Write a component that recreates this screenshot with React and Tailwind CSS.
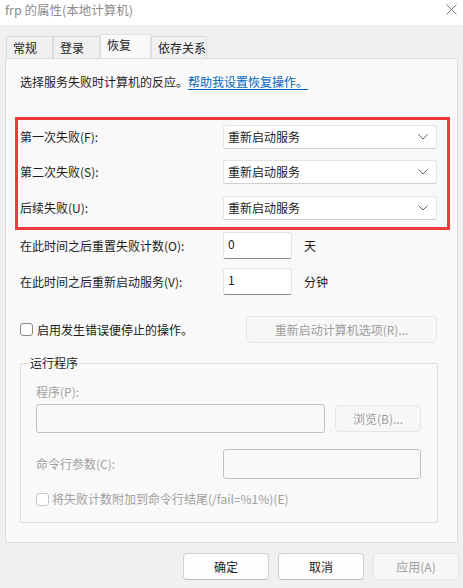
import React from 'react';

const font = "font-['Microsoft_YaHei_UI','Noto_Sans_CJK_SC',sans-serif]";

const Chevron = () => (
  <svg width="10" height="6" viewBox="0 0 10 6" className="text-[#5f5f5f]">
    <path d="M0.5 0.5 L5 5 L9.5 0.5" fill="none" stroke="currentColor" strokeWidth="1" />
  </svg>
);

const Select = ({ value }) => (
  <div className="w-[214px] h-[24px] bg-white border border-[#e3e3e3] border-b-[#cfcfcf] rounded-[3px] flex items-center justify-between pl-[4px] pr-[8px]">
    <span>{value}</span>
    <Chevron />
  </div>
);

const Checkbox = ({ disabled }) => (
  <span
    className={`inline-block w-[13px] h-[13px] rounded-[3px] border bg-white ${
      disabled ? 'border-[#c8c8c8]' : 'border-[#8a8a8a]'
    }`}
  />
);

const Tab = ({ label, active, w }) => (
  <div
    className={`flex items-center pl-[6px] border border-b-0 ${
      active
        ? 'h-[24px] bg-[#f9f9f9] border-[#e2e2e2] pb-[3px]'
        : 'h-[22px] bg-[#f0f0f0] border-[#dcdcdc]'
    }`}
    style={{ width: w }}
  >
    {label}
  </div>
);

const FailRow = ({ label, className = '' }) => (
  <div className={`h-[24px] flex items-center justify-between pl-[2px] pr-[10px] ${className}`}>
    <span>{label}</span>
    <Select value="重新启动服务" />
  </div>
);

const NumRow = ({ label, value, unit, className = '' }) => (
  <div className={`h-[27px] flex items-center pl-[14px] ${className}`}>
    <span className="w-[203px]">{label}</span>
    <div className="w-[69px] h-[27px] bg-white border border-[#e3e3e3] border-b-[#8a8a8a] rounded-[3px] pl-[4px] pt-[3px] leading-[16px]">
      {value}
    </div>
    <span className="ml-[12px]">{unit}</span>
  </div>
);

const Button = ({ children, disabled, className = '' }) => (
  <div
    className={`h-[27px] rounded-[4px] border flex items-center justify-center ${
      disabled
        ? 'border-[#e6e6e6] bg-[#f7f7f7] text-[#9d9d9d]'
        : 'border-[#d0d0d0] border-b-[#bdbdbd] bg-[#fdfdfd] text-[#1b1b1b]'
    } ${className}`}
  >
    {children}
  </div>
);

export default function App() {
  return (
    <div className={`w-[463px] h-[588px] bg-[#f0f0f0] flex flex-col text-[12px] leading-[16px] text-[#1b1b1b] ${font}`}>
      {/* title bar */}
      <div className="h-[25px] bg-white flex items-start justify-between pl-[5px] pr-[6px]">
        <span className="text-[#8c8c8c] text-[12.5px] leading-[20px]">frp 的属性(本地计算机)</span>
        <svg width="11" height="11" viewBox="0 0 11 11" className="mt-[4px] text-[#7a7a7a]">
          <path d="M0.5 0.5 L10.5 10.5 M10.5 0.5 L0.5 10.5" stroke="currentColor" strokeWidth="1" />
        </svg>
      </div>

      {/* tabs */}
      <div className="h-[33px] flex items-end pl-[6px]">
        <Tab label="常规" w={47} />
        <Tab label="登录" w={47} />
        <Tab label="恢复" w={51} active />
        <Tab label="依存关系" w={56} />
      </div>

      {/* panel */}
      <div className="ml-[5px] w-[453px] h-[485px] bg-[#f9f9f9] border border-[#dcdcdc] flex flex-col">
        <div className="mt-[15px] pl-[14px]">
          选择服务失败时计算机的反应。
          <span className="text-[#0067c0] underline underline-offset-2">帮助我设置恢复操作。</span>
        </div>

        <div className="mt-[27px] ml-[9px] w-[435px] h-[113px] border-[3px] border-[#ee3a3a] pt-[5px] flex flex-col">
          <FailRow label="第一次失败(F):" />
          <FailRow label="第二次失败(S):" className="mt-[11px]" />
          <FailRow label="后续失败(U):" className="mt-[12px]" />
        </div>

        <NumRow label="在此时间之后重置失败计数(O):" value="0" unit="天" className="mt-[2px]" />
        <NumRow label="在此时间之后重新启动服务(V):" value="1" unit="分钟" className="mt-[9px]" />

        <div className="mt-[21px] h-[27px] flex items-center pl-[14px]">
          <Checkbox />
          <span className="ml-[4px]">启用发生错误便停止的操作。</span>
          <Button disabled className="ml-auto mr-[20px] w-[191px]">重新启动计算机选项(R)...</Button>
        </div>

        <fieldset className="mt-[12px] ml-[14px] w-[418px] h-[168px] border border-[#dcdcdc] rounded-[2px] text-[#a0a0a0]">
          <legend className="ml-[8px] px-[1px] text-[#1b1b1b] leading-[16px]">运行程序</legend>
          <div className="pl-[15px] pr-[15px] flex flex-col">
            <div className="mt-[13px]">程序(P):</div>
            <div className="mt-[4px] flex items-center">
              <div className="w-[289px] h-[29px] bg-[#f9f9f9] border border-[#bfbfbf] rounded-[3px]" />
              <Button disabled className="ml-[10px] w-[86px]">浏览(B)...</Button>
            </div>
            <div className="mt-[16px] h-[30px] flex items-center">
              <span className="w-[187px]">命令行参数(C):</span>
              <div className="w-[198px] h-[30px] bg-[#f9f9f9] border border-[#bfbfbf] rounded-[3px]" />
            </div>
            <div className="mt-[12px] h-[16px] flex items-center">
              <Checkbox disabled />
              <span className="ml-[3px]">将失败计数附加到命令行结尾(/fail=%1%)(E)</span>
            </div>
          </div>
        </fieldset>
      </div>

      {/* dialog buttons */}
      <div className="mt-[10px] flex justify-end gap-[9px] pr-[4px]">
        <Button className="w-[86px]">确定</Button>
        <Button className="w-[86px]">取消</Button>
        <Button disabled className="w-[86px]">应用(A)</Button>
      </div>
    </div>
  );
}
